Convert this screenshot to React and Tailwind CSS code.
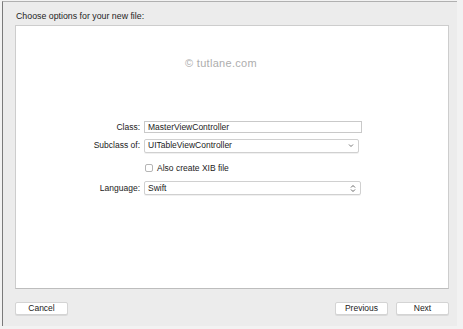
import React from 'react';

const font = { fontFamily: '"Liberation Sans", Arial, sans-serif' };

const Field = ({ value }) => (
  <div className="h-[12px] w-[218px] border border-[#c9c9c9] bg-white pl-[3px] text-[8.5px] leading-[10px] text-[#222]">
    {value}
  </div>
);

const Popup = ({ value, w, double }) => (
  <div
    className="flex h-[14px] items-center justify-between rounded-[2px] border border-[#d0d0d0] bg-white pl-[3px] pr-[4px] text-[8.5px] text-[#222] shadow-[0_1px_0_rgba(0,0,0,0.06)]"
    style={{ width: w }}
  >
    <span>{value}</span>
    {double ? (
      <svg width="6" height="9" viewBox="0 0 6 9" fill="none" stroke="#555" strokeWidth="0.9">
        <path d="M1 3.5 L3 1.5 L5 3.5" />
        <path d="M1 5.5 L3 7.5 L5 5.5" />
      </svg>
    ) : (
      <svg width="6" height="5" viewBox="0 0 6 5" fill="none" stroke="#666" strokeWidth="0.9">
        <path d="M1 1.5 L3 3.5 L5 1.5" />
      </svg>
    )}
  </div>
);

const Button = ({ label }) => (
  <button className="h-[13px] w-[53px] rounded-[2px] border border-[#d4d4d4] bg-white text-[8.5px] leading-[11px] text-[#222] shadow-[0_1px_0_rgba(0,0,0,0.08)]">
    {label}
  </button>
);

export default function App() {
  return (
    <div className="h-[329px] w-[463px] bg-[#f2f2f2] pl-[2px] pt-[1px]" style={font}>
      <div className="flex h-[325px] w-[455px] flex-col border-l border-t border-[#7a7a7a] border-t-[#b0b0b0] bg-[#ececec]">
        <div className="h-[23px] pl-[13px] pt-[9px] text-[8.8px] leading-[11px] text-[#1e1e1e]">
          Choose options for your new file:
        </div>
        <div className="relative ml-[12px] mr-[8px] flex h-[264px] items-center border border-[#cdcdcd] border-b-[#bdbdbd] bg-white">
          <div className="absolute left-0 right-0 top-[29px] pr-[22px] text-center text-[11px] tracking-[0.3px] text-[#adadad]">
            © tutlane.com
          </div>
          <div className="ml-[4px] mt-[2px] grid grid-cols-[120px_218px] items-center gap-x-[4px] text-[8.5px] text-[#222]">
            <div className="whitespace-nowrap text-right">Class:</div>
            <Field value="MasterViewController" />
            <div className="mt-[5px] whitespace-nowrap text-right">Subclass of:</div>
            <div className="mt-[5px]">
              <Popup value="UITableViewController" w="215px" />
            </div>
            <div className="mt-[9px]" />
            <div className="mt-[9px] flex items-center gap-[4px]">
              <span className="ml-[1px] h-[8px] w-[8px] rounded-[2px] border border-[#b5b5b5] bg-white" />
              <span>Also create XIB file</span>
            </div>
            <div className="mt-[7px] whitespace-nowrap text-right">Language:</div>
            <div className="mt-[7px]">
              <Popup value="Swift" w="217px" double />
            </div>
          </div>
        </div>
        <div className="flex items-center pl-[12px] pr-[8px] pt-[13px]">
          <Button label="Cancel" />
          <div className="flex-1" />
          <Button label="Previous" />
          <div className="w-[8px]" />
          <Button label="Next" />
        </div>
      </div>
    </div>
  );
}
